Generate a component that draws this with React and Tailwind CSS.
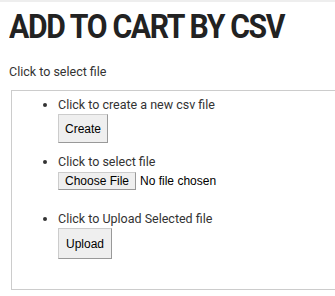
export default function App() {
    return (
        <div className="w-[335px] h-[296px] overflow-hidden bg-white border-t-2 border-[#eeeeee] text-[#333333]" style={{ fontFamily: 'Roboto, sans-serif' }}>
            <h1 className="ml-[9px] mt-[5px] text-[34px] leading-[38px] font-bold tracking-[-1.5px] text-[#222222] origin-left scale-x-[0.887] whitespace-nowrap">ADD TO CART BY CSV</h1>
            <p className="ml-[9px] mt-[19px] text-[12.5px] leading-[16px]">Click to select file</p>
            <div className="ml-[11px] mt-[10px] h-[200px] border border-r-0 border-[#cccccc]">
                <ul className="list-disc pl-[46px] pt-[6px] text-[12.5px] leading-[16px]">
                    <li>
                        <span>Click to create a new csv file</span>
                        <div className="flex mt-[1px]">
                            <button className="h-[29px] px-[6px] bg-[#efefef] border border-[#cccccc] border-r-[#999999] border-b-[#999999] text-black text-[12px] font-['Liberation_Sans',sans-serif]">Create</button>
                        </div>
                    </li>
                    <li className="mt-[11px]">
                        <span>Click to select file</span>
                        <div className="flex items-center mt-[2px] text-[12px] text-black font-['Liberation_Sans',sans-serif]">
                            <span className="h-[18px] px-[6px] flex items-center bg-[#efefef] border border-[#999999] border-t-[#cccccc] border-l-[#cccccc]">Choose File</span>
                            <span className="ml-[4px]">No file chosen</span>
                        </div>
                    </li>
                    <li className="mt-[21px]">
                        <span>Click to Upload Selected file</span>
                        <div className="flex mt-[1px]">
                            <button className="h-[31px] px-[7px] bg-[#efefef] border border-[#cccccc] border-r-[#999999] border-b-[#999999] text-black text-[12px] font-['Liberation_Sans',sans-serif]">Upload</button>
                        </div>
                    </li>
                </ul>
            </div>
        </div>
    )
}
